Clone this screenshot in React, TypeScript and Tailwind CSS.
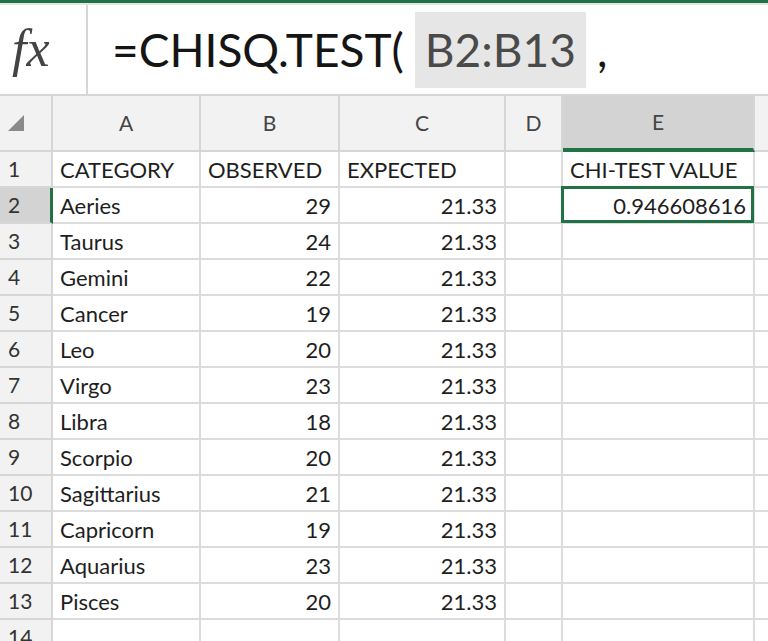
import React from "react";

const ROWS: Array<[string, string, string]> = [
  ["Aeries", "29", "21.33"],
  ["Taurus", "24", "21.33"],
  ["Gemini", "22", "21.33"],
  ["Cancer", "19", "21.33"],
  ["Leo", "20", "21.33"],
  ["Virgo", "23", "21.33"],
  ["Libra", "18", "21.33"],
  ["Scorpio", "20", "21.33"],
  ["Sagittarius", "21", "21.33"],
  ["Capricorn", "19", "21.33"],
  ["Aquarius", "23", "21.33"],
  ["Pisces", "20", "21.33"],
];

const GRID = "grid grid-cols-[53px_148px_139px_166px_57px_192px_1fr]";
const CELL = "h-[36px] border-r-2 border-b-2 border-[#dcdcdc] flex items-center px-[7px] text-[22px] text-[#1e1e1e] whitespace-nowrap overflow-hidden";

function ColHeader({ label, active }: { label: string; active?: boolean }) {
  return (
    <div
      className={
        "h-[56px] flex items-center justify-center border-r-2 border-[#d6d6d6] text-[21px] text-[#444] " +
        (active ? "bg-[#d3d3d3] border-b-4 border-b-[#217346]" : "bg-[#f2f2f2] border-b-2 border-b-[#d6d6d6]")
      }
    >
      {label}
    </div>
  );
}

function RowHeader({ n, active }: { n: number; active?: boolean }) {
  return (
    <div
      className={
        "h-[36px] flex items-center pl-[8px] border-b-2 border-[#d6d6d6] text-[21px] text-[#333] " +
        (active ? "bg-[#d3d3d3] border-r-[3px] border-r-[#217346]" : "bg-[#f2f2f2] border-r-2 border-r-[#d6d6d6]")
      }
    >
      {n}
    </div>
  );
}

export default function App() {
  return (
    <div className="w-[768px] h-[641px] overflow-hidden bg-white font-['Lato','Open_Sans',sans-serif]">
      {/* ribbon edge */}
      <div className="h-[3px] bg-[#217346]" />
      <div className="h-[2px] bg-[#e6e6e6]" />

      {/* formula bar */}
      <div className="h-[91px] flex items-stretch border-b-2 border-[#d6d6d6]">
        <div className="w-[88px] shrink-0 border-r-2 border-[#d6d6d6] flex items-center pl-[12px] pb-[2px]">
          <span className="font-['Liberation_Serif',serif] italic text-[52px] text-[#444] leading-none">fx</span>
        </div>
        <div className="flex items-center pl-[24px] text-[46px] text-[#151515] leading-none whitespace-nowrap">
          <span>=CHISQ.TEST(</span>
          <span className="ml-[11px] bg-[#e6e6e6] text-[#4a4a4a] px-[10px] h-[76px] flex items-center">B2:B13</span>
          <span className="ml-[11px]">,</span>
        </div>
      </div>

      {/* sheet */}
      <div className={GRID}>
        <div className="h-[56px] bg-[#f2f2f2] border-r-2 border-b-2 border-[#d6d6d6] flex items-center pl-[8px]">
          <svg width="16" height="16" viewBox="0 0 16 16">
            <polygon points="16,0 16,16 0,16" fill="#8a8a8a" />
          </svg>
        </div>
        <ColHeader label="A" />
        <ColHeader label="B" />
        <ColHeader label="C" />
        <ColHeader label="D" />
        <ColHeader label="E" active />
        <div className="h-[56px] bg-[#f2f2f2] border-b-2 border-[#d6d6d6]" />

        {/* row 1 */}
        <RowHeader n={1} />
        <div className={CELL}>CATEGORY</div>
        <div className={CELL}>OBSERVED</div>
        <div className={CELL}>EXPECTED</div>
        <div className={CELL} />
        <div className={CELL}>CHI-TEST VALUE</div>
        <div className={CELL} />

        {ROWS.map(([name, obs, exp], i) => {
          const n = i + 2;
          return (
            <React.Fragment key={n}>
              <RowHeader n={n} active={n === 2} />
              <div className={CELL}>{name}</div>
              <div className={CELL + " justify-end"}>{obs}</div>
              <div className={CELL + " justify-end"}>{exp}</div>
              <div className={CELL} />
              {n === 2 ? (
                <div className={CELL + " justify-end relative overflow-visible"}>
                  <div className="absolute -left-[2px] -top-[2px] -right-[1px] -bottom-[1px] border-[3px] border-[#217346]" />
                  0.946608616
                </div>
              ) : (
                <div className={CELL} />
              )}
              <div className={CELL} />
            </React.Fragment>
          );
        })}

        <RowHeader n={14} />
        <div className={CELL} />
        <div className={CELL} />
        <div className={CELL} />
        <div className={CELL} />
        <div className={CELL} />
        <div className={CELL} />
      </div>
    </div>
  );
}
